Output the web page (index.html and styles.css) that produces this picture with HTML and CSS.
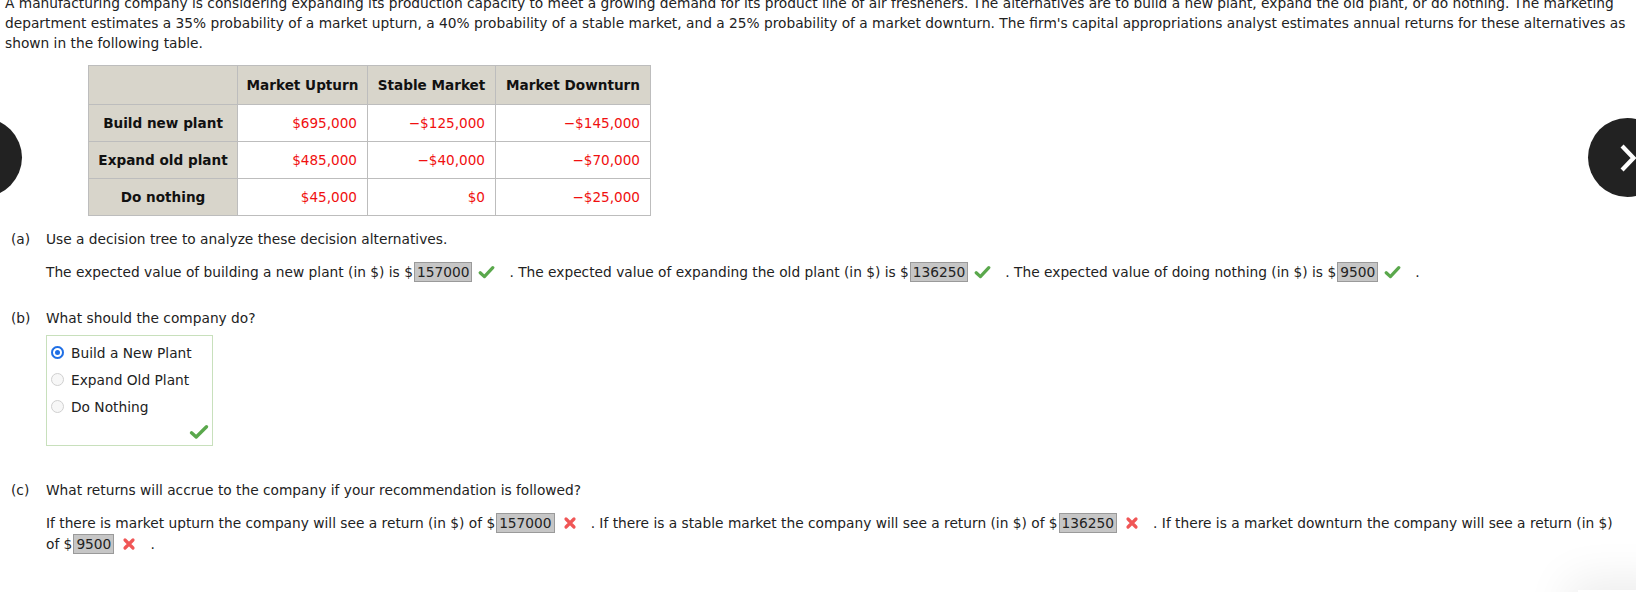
FILE: index.html
```html
<!DOCTYPE html>
<html lang="en">
<head>
<meta charset="utf-8">
<title>Decision alternatives</title>
<link rel="stylesheet" href="styles.css">
</head>
<body>
<div class="page">
  <p class="intro">A manufacturing company is considering expanding its production capacity to meet a growing demand for its product line of air fresheners. The alternatives are to build a new plant, expand the old plant, or do nothing. The marketing department estimates a 35% probability of a market upturn, a 40% probability of a stable market, and a 25% probability of a market downturn. The firm's capital appropriations analyst estimates annual returns for these alternatives as shown in the following table.</p>

  <table class="returns">
    <colgroup>
      <col class="c-label"><col class="c-up"><col class="c-stable"><col class="c-down">
    </colgroup>
    <thead>
      <tr><th></th><th>Market Upturn</th><th>Stable Market</th><th>Market Downturn</th></tr>
    </thead>
    <tbody>
      <tr><th>Build new plant</th><td>$695,000</td><td>&minus;$125,000</td><td>&minus;$145,000</td></tr>
      <tr><th>Expand old plant</th><td>$485,000</td><td>&minus;$40,000</td><td>&minus;$70,000</td></tr>
      <tr><th>Do nothing</th><td>$45,000</td><td>$0</td><td>&minus;$25,000</td></tr>
    </tbody>
  </table>

  <section class="part part-a">
    <span class="tag">(a)</span>
    <div class="body">
      <p class="q">Use a decision tree to analyze these decision alternatives.</p>
      <p class="ans">The expected value of building a new plant (in $) is $<span class="box">157000</span><svg class="mark ok" width="17" height="14" viewBox="0 0 17 14"><path d="M2.2 7.8 L6.4 11.6 L14.8 2.6" fill="none" stroke="#5aa84c" stroke-width="3.2" stroke-linecap="round" stroke-linejoin="round"/></svg>. The expected value of expanding the old plant (in $) is $<span class="box">136250</span><svg class="mark ok" width="17" height="14" viewBox="0 0 17 14"><path d="M2.2 7.8 L6.4 11.6 L14.8 2.6" fill="none" stroke="#5aa84c" stroke-width="3.2" stroke-linecap="round" stroke-linejoin="round"/></svg>. The expected value of doing nothing (in $) is $<span class="box">9500</span><svg class="mark ok" width="17" height="14" viewBox="0 0 17 14"><path d="M2.2 7.8 L6.4 11.6 L14.8 2.6" fill="none" stroke="#5aa84c" stroke-width="3.2" stroke-linecap="round" stroke-linejoin="round"/></svg>.</p>
    </div>
  </section>

  <section class="part part-b">
    <span class="tag">(b)</span>
    <div class="body">
      <p class="q">What should the company do?</p>
      <div class="choices">
        <div class="choice"><span class="radio on"></span>Build a New Plant</div>
        <div class="choice"><span class="radio"></span>Expand Old Plant</div>
        <div class="choice"><span class="radio"></span>Do Nothing</div>
        <svg class="choice-ok" width="20" height="16" viewBox="0 0 20 16"><path d="M2.5 8.8 L7.2 13 L17.5 2.8" fill="none" stroke="#5aa84c" stroke-width="3.4" stroke-linecap="round" stroke-linejoin="round"/></svg>
      </div>
    </div>
  </section>

  <section class="part part-c">
    <span class="tag">(c)</span>
    <div class="body">
      <p class="q">What returns will accrue to the company if your recommendation is followed?</p>
      <p class="ans">If there is market upturn the company will see a return (in $) of $<span class="box">157000</span><svg class="mark bad" width="14" height="14" viewBox="0 0 14 14"><path d="M3 3 L11 11 M11 3 L3 11" fill="none" stroke="#f05656" stroke-width="3.2" stroke-linecap="round"/></svg>. If there is a stable market the company will see a return (in $) of $<span class="box">136250</span><svg class="mark bad" width="14" height="14" viewBox="0 0 14 14"><path d="M3 3 L11 11 M11 3 L3 11" fill="none" stroke="#f05656" stroke-width="3.2" stroke-linecap="round"/></svg>. If there is a market downturn the company will see a return (in $) of $<span class="box">9500</span><svg class="mark bad" width="14" height="14" viewBox="0 0 14 14"><path d="M3 3 L11 11 M11 3 L3 11" fill="none" stroke="#f05656" stroke-width="3.2" stroke-linecap="round"/></svg>.</p>
    </div>
  </section>
</div>

<div class="nav nav-prev"></div>
<div class="nav nav-next"><svg width="79" height="79" viewBox="0 0 79 79"><path d="M35.5 29.5 L45.5 40 L35.5 50.5" fill="none" stroke="#fff" stroke-width="4.2" stroke-linecap="square"/></svg></div>
<div class="floating-shadow"></div>
</body>
</html>
```

FILE: styles.css
```css
html, body {
  margin: 0;
  padding: 0;
  overflow: hidden;
  background: #fff;
}

body {
  position: relative;
  width: 1636px;
  height: 592px;
  font-family: "DejaVu Sans", Verdana, sans-serif;
  font-size: 13.75px;
  color: #222;
}

.page {
  margin-top: -7px;
  padding-left: 5px;
  width: 1631px;
}

.intro {
  margin: 0;
  line-height: 20px;
}

/* table */
.returns {
  border-collapse: collapse;
  margin: 12px 0 0 83px;
  font-size: 13.6px;
}
.c-label { width: 149px; }
.c-up { width: 130px; }
.c-stable { width: 128px; }
.c-down { width: 155px; }

.returns th,
.returns td {
  border: 1px solid #bdbdbd;
  height: 37px;
  padding: 0 10px;
  box-sizing: border-box;
  white-space: nowrap;
}
.returns thead th { height: 39px; }
.returns th {
  padding: 0 4px;
  background: #d8d5cb;
  color: #111;
  font-weight: bold;
  text-align: center;
}
.returns td {
  background: #fff;
  color: #f01010;
  text-align: right;
}

/* parts */
.part {
  display: grid;
  grid-template-columns: 35px 1fr;
  margin: 0 8px 0 6px;
  line-height: 20px;
}
.part p { margin: 0; }

.part-a { margin-top: 13px; }
.part-b { margin-top: 25px; }
.part-c { margin-top: 34px; }

.ans {
  margin-top: 12px !important;
  line-height: 22px;
}
.part-c .ans {
  margin-top: 13px !important;
  line-height: 21px;
}

.box {
  display: inline-block;
  background: #c6c6c6;
  border: 1px solid #9a9a9a;
  padding: 0 2px;
  line-height: 18px;
  margin-left: 1px;
  color: #222;
}

.mark {
  vertical-align: -2px;
}
.mark.ok { margin: 0 14px 0 6px; }
.mark.bad { margin: 0 14px 0 8px; }

/* choices */
.choices {
  position: relative;
  margin-top: 7px;
  width: 165px;
  height: 106px;
  border: 1px solid #c8e0bc;
  padding-top: 3px;
  box-sizing: content-box;
}
.choice {
  display: flex;
  align-items: center;
  gap: 7px;
  height: 27px;
  padding-left: 4px;
}
.radio {
  width: 13px;
  height: 13px;
  border-radius: 50%;
  box-sizing: border-box;
  border: 1px solid #d0d0d0;
  background: #f7f7f7;
}
.radio.on {
  border: none;
  background: #1f6fe5;
  box-shadow: inset 0 0 0 2px #1f6fe5, inset 0 0 0 4px #fff;
}
.choice-ok {
  position: absolute;
  right: 3px;
  bottom: 5px;
}

/* overlays */
.nav {
  position: absolute;
  top: 118px;
  width: 79px;
  height: 79px;
  border-radius: 50%;
  background: #222;
}
.nav-prev { left: -57px; }
.nav-next { left: 1588px; }
.nav svg { display: block; }

.floating-shadow {
  position: absolute;
  left: 1578px;
  top: 590px;
  width: 90px;
  height: 40px;
  background: #fff;
  box-shadow: 0 0 45px 10px rgba(0, 0, 0, 0.08);
}
```
